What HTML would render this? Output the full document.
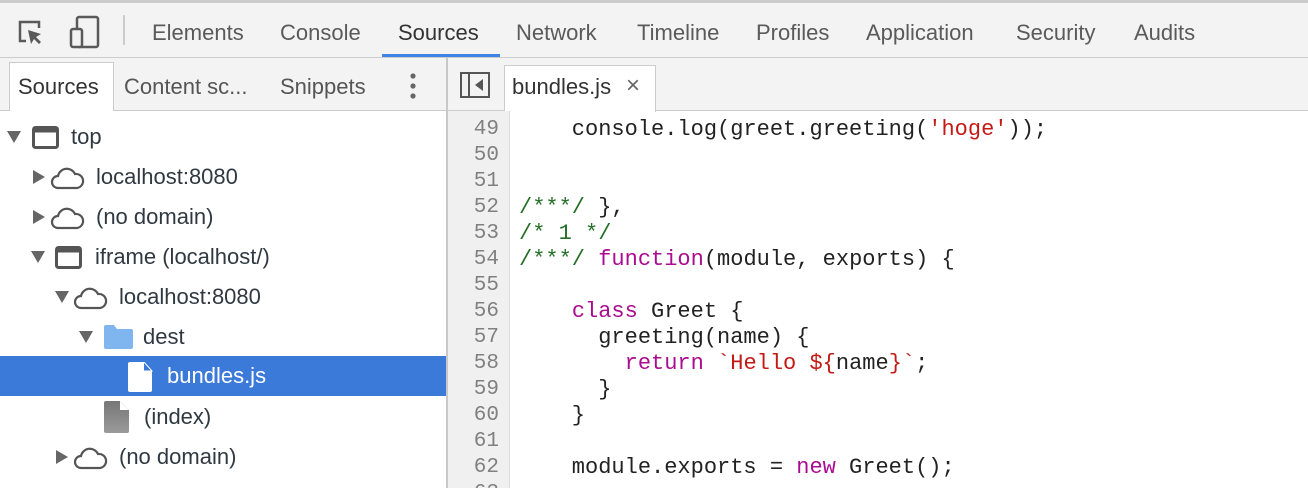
<!DOCTYPE html>
<html style="overflow:hidden;width:1308px;height:488px"><head><style>
*{margin:0;padding:0;box-sizing:border-box}
body{width:1308px;height:488px;overflow:hidden;background:#fff;font-family:"Liberation Sans",sans-serif;color:#333;position:relative}
.top{position:absolute;left:0;top:0;width:1308px;height:58px;background:#f3f3f3;border-top:3px solid #ccc;border-bottom:1px solid #ccc}
.tab{position:absolute;top:17px;font-size:22px;color:#5a5a5a}
.sel{color:#333}
.ul{position:absolute;left:382px;top:51px;width:118px;height:3px;background:#3d84e6}
.bar2{position:absolute;top:58px;height:53px;background:#f3f3f3;border-bottom:1px solid #ccc}
.t2{position:absolute;top:16px;font-size:22px;color:#555}
.left{position:absolute;left:0;top:111px;width:446px;height:377px;background:#fff}
.vline{position:absolute;left:446px;top:58px;width:2px;height:430px;background:#c8c8c8}
.row{position:absolute;left:0;width:446px;height:40px;font-size:22px;color:#303942;line-height:40px}
.row span{position:absolute;top:0}
.tri{position:absolute;width:0;height:0}
.gut{position:absolute;left:448px;top:111px;width:62px;height:377px;background:#f0f0f0;border-right:1px solid #ddd;overflow:hidden}
.ln{position:absolute;right:10px;font-family:"Liberation Mono",monospace;font-size:21px;color:#808080}
.code{position:absolute;left:519px;font-family:"Liberation Mono",monospace;font-size:22px;color:#222;white-space:pre}
.c{color:#236e25}.k{color:#aa0d91}.s{color:#c41a16}
</style></head><body>
<div class="top">
<svg style="position:absolute;left:16px;top:14px" width="32" height="32" viewBox="0 0 32 32"><path d="M10 24H4V5h19v6" fill="none" stroke="#5a5a5a" stroke-width="2.5"/><path d="M12 13l3 14 3-5 5 5 2-2-5-5 5-3z" fill="#5a5a5a"/></svg>
<svg style="position:absolute;left:68px;top:12px" width="34" height="36" viewBox="0 0 34 36"><rect x="9" y="2" width="21" height="30" rx="2" fill="none" stroke="#5a5a5a" stroke-width="2.5"/><rect x="3" y="14" width="11" height="18" rx="2" fill="#f3f3f3" stroke="#5a5a5a" stroke-width="2.5"/></svg>
<div style="position:absolute;left:123px;top:12px;width:2px;height:30px;background:#ccc"></div>
<div class="tab" style="left:152px">Elements</div>
<div class="tab" style="left:280px">Console</div>
<div class="tab sel" style="left:398px">Sources</div>
<div class="tab" style="left:516px">Network</div>
<div class="tab" style="left:637px">Timeline</div>
<div class="tab" style="left:756px">Profiles</div>
<div class="tab" style="left:866px">Application</div>
<div class="tab" style="left:1016px">Security</div>
<div class="tab" style="left:1134px">Audits</div>
<div class="ul"></div>
</div>
<div class="bar2" style="left:0;width:446px">
<div style="position:absolute;left:9px;top:4px;width:105px;height:49px;background:#fff;border:1px solid #ccc;border-bottom:none"></div>
<div class="t2" style="left:18px;color:#333">Sources</div>
<div class="t2" style="left:124px">Content sc...</div>
<div class="t2" style="left:280px">Snippets</div>
<svg style="position:absolute;left:408px;top:14px" width="10" height="28"><circle cx="5" cy="4" r="2.6" fill="#666"/><circle cx="5" cy="14" r="2.6" fill="#666"/><circle cx="5" cy="24" r="2.6" fill="#666"/></svg>
</div>
<div class="bar2" style="left:448px;width:860px">
<svg style="position:absolute;left:12px;top:14px" width="30" height="26"><rect x="1" y="1" width="28" height="24" fill="none" stroke="#555" stroke-width="2"/><line x1="9" y1="1" x2="9" y2="25" stroke="#555" stroke-width="2"/><path d="M23 7v12l-8-6z" fill="#555"/></svg>
<div style="position:absolute;left:56px;top:7px;width:152px;height:47px;background:#fff;border:1px solid #ccc;border-bottom:none"></div>
<div class="t2" style="left:64px;color:#333">bundles.js</div>
<div class="t2" style="left:178px;color:#666;font-size:24px;top:14px">×</div>
</div>
<div class="vline"></div>
<div class="left">
<div class="row" style="top:6px">
<div class="tri" style="left:7px;top:14px;border-left:7px solid transparent;border-right:7px solid transparent;border-top:12px solid #666"></div>
<svg style="position:absolute;left:32px;top:9px" width="28" height="24"><rect x="1.5" y="1.5" width="24" height="20" rx="2" fill="none" stroke="#555" stroke-width="3"/><rect x="1.5" y="1.5" width="24" height="5" fill="#555"/></svg>
<span style="left:71px">top</span></div>
<div class="row" style="top:46px">
<div class="tri" style="left:33px;top:13px;border-top:7px solid transparent;border-bottom:7px solid transparent;border-left:12px solid #666"></div>
<svg style="position:absolute;left:49px;top:10px" width="38" height="24" viewBox="0 0 38 24"><path d="M9 21a6 6 0 0 1 0-12 9 9 0 0 1 17-2 7 7 0 0 1 2 14z" fill="none" stroke="#555" stroke-width="2.2"/></svg>
<span style="left:96px">localhost:8080</span></div>
<div class="row" style="top:86px">
<div class="tri" style="left:33px;top:13px;border-top:7px solid transparent;border-bottom:7px solid transparent;border-left:12px solid #666"></div>
<svg style="position:absolute;left:49px;top:10px" width="38" height="24" viewBox="0 0 38 24"><path d="M9 21a6 6 0 0 1 0-12 9 9 0 0 1 17-2 7 7 0 0 1 2 14z" fill="none" stroke="#555" stroke-width="2.2"/></svg>
<span style="left:96px">(no domain)</span></div>
<div class="row" style="top:126px">
<div class="tri" style="left:31px;top:14px;border-left:7px solid transparent;border-right:7px solid transparent;border-top:12px solid #666"></div>
<svg style="position:absolute;left:55px;top:9px" width="28" height="24"><rect x="1.5" y="1.5" width="24" height="20" rx="2" fill="none" stroke="#555" stroke-width="3"/><rect x="1.5" y="1.5" width="24" height="5" fill="#555"/></svg>
<span style="left:95px">iframe (localhost/)</span></div>
<div class="row" style="top:166px">
<div class="tri" style="left:55px;top:14px;border-left:7px solid transparent;border-right:7px solid transparent;border-top:12px solid #666"></div>
<svg style="position:absolute;left:72px;top:10px" width="38" height="24" viewBox="0 0 38 24"><path d="M9 21a6 6 0 0 1 0-12 9 9 0 0 1 17-2 7 7 0 0 1 2 14z" fill="none" stroke="#555" stroke-width="2.2"/></svg>
<span style="left:119px">localhost:8080</span></div>
<div class="row" style="top:206px">
<div class="tri" style="left:79px;top:14px;border-left:7px solid transparent;border-right:7px solid transparent;border-top:12px solid #666"></div>
<svg style="position:absolute;left:104px;top:8px" width="29" height="24"><path d="M0 2a2 2 0 0 1 2-2h8l3 4h14a2 2 0 0 1 2 2v16a2 2 0 0 1-2 2H2a2 2 0 0 1-2-2z" fill="#7fb6ef"/></svg>
<span style="left:143px">dest</span></div>
<div class="row" style="top:245px;background:#3b7ad9;color:#fff;height:40px">
<svg style="position:absolute;left:128px;top:6px" width="25" height="30"><path d="M2 0h14l8 9v19a2 2 0 0 1-2 2H2a2 2 0 0 1-2-2V2a2 2 0 0 1 2-2z" fill="#fff"/><path d="M16 0v9h8z" fill="#3b7ad9"/><path d="M16 0l8 9h-8" fill="none" stroke="#fff" stroke-width="1"/></svg>
<span style="left:167px">bundles.js</span></div>
<div class="row" style="top:286px">
<svg style="position:absolute;left:104px;top:4px" width="25" height="32"><defs><linearGradient id="g" x1="0" y1="0" x2="0" y2="1"><stop offset="0" stop-color="#777"/><stop offset="1" stop-color="#9a9a9a"/></linearGradient></defs><path d="M2 0h14l9 9v21a2 2 0 0 1-2 2H2a2 2 0 0 1-2-2V2a2 2 0 0 1 2-2z" fill="url(#g)"/><path d="M16 0v9h9z" fill="#fff"/></svg>
<span style="left:144px">(index)</span></div>
<div class="row" style="top:326px">
<div class="tri" style="left:56px;top:13px;border-top:7px solid transparent;border-bottom:7px solid transparent;border-left:12px solid #666"></div>
<svg style="position:absolute;left:72px;top:10px" width="38" height="24" viewBox="0 0 38 24"><path d="M9 21a6 6 0 0 1 0-12 9 9 0 0 1 17-2 7 7 0 0 1 2 14z" fill="none" stroke="#555" stroke-width="2.2"/></svg>
<span style="left:119px">(no domain)</span></div>
</div>
<div class="gut">
<div class="ln" style="top:7px">49</div><div class="ln" style="top:33px">50</div><div class="ln" style="top:59px">51</div><div class="ln" style="top:85px">52</div><div class="ln" style="top:111px">53</div><div class="ln" style="top:137px">54</div><div class="ln" style="top:163px">55</div><div class="ln" style="top:189px">56</div><div class="ln" style="top:215px">57</div><div class="ln" style="top:241px">58</div><div class="ln" style="top:267px">59</div><div class="ln" style="top:293px">60</div><div class="ln" style="top:319px">61</div><div class="ln" style="top:345px">62</div><div class="ln" style="top:371px">63</div>
</div>
<div class="code" style="top:117px">    console.log(greet.greeting(<span class="s">'hoge'</span>));</div>
<div class="code" style="top:195px"><span class="c">/***/</span> },</div>
<div class="code" style="top:221px"><span class="c">/* 1 */</span></div>
<div class="code" style="top:247px"><span class="c">/***/</span> <span class="k">function</span>(module, exports) {</div>
<div class="code" style="top:299px">    <span class="k">class</span> Greet {</div>
<div class="code" style="top:325px">      greeting(name) {</div>
<div class="code" style="top:351px">        <span class="k">return</span> <span class="s">`Hello ${</span>name<span class="s">}`</span>;</div>
<div class="code" style="top:377px">      }</div>
<div class="code" style="top:403px">    }</div>
<div class="code" style="top:455px">    module.exports = <span class="k">new</span> Greet();</div>
</body></html>
